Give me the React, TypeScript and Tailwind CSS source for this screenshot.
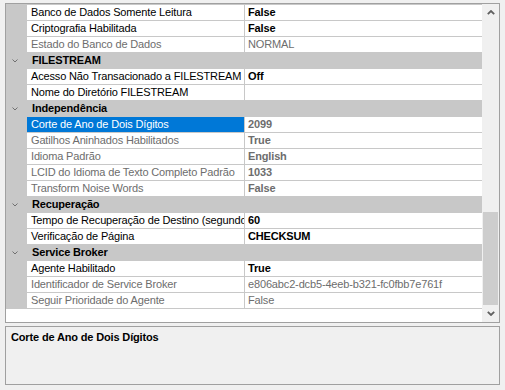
type Row =
  | { kind: "cat"; label: string }
  | {
      kind: "prop";
      name: string;
      value: string;
      readOnly?: boolean;
      bold?: boolean;
      selected?: boolean;
    };

const rows: Row[] = [
  { kind: "prop", name: "Banco de Dados Somente Leitura", value: "False", bold: true },
  { kind: "prop", name: "Criptografia Habilitada", value: "False", bold: true },
  { kind: "prop", name: "Estado do Banco de Dados", value: "NORMAL", readOnly: true },
  { kind: "cat", label: "FILESTREAM" },
  { kind: "prop", name: "Acesso Não Transacionado a FILESTREAM", value: "Off", bold: true },
  { kind: "prop", name: "Nome do Diretório FILESTREAM", value: "" },
  { kind: "cat", label: "Independência" },
  { kind: "prop", name: "Corte de Ano de Dois Dígitos", value: "2099", readOnly: true, bold: true, selected: true },
  { kind: "prop", name: "Gatilhos Aninhados Habilitados", value: "True", readOnly: true, bold: true },
  { kind: "prop", name: "Idioma Padrão", value: "English", readOnly: true, bold: true },
  { kind: "prop", name: "LCID do Idioma de Texto Completo Padrão", value: "1033", readOnly: true, bold: true },
  { kind: "prop", name: "Transform Noise Words", value: "False", readOnly: true, bold: true },
  { kind: "cat", label: "Recuperação" },
  { kind: "prop", name: "Tempo de Recuperação de Destino (segundos)", value: "60", bold: true },
  { kind: "prop", name: "Verificação de Página", value: "CHECKSUM", bold: true },
  { kind: "cat", label: "Service Broker" },
  { kind: "prop", name: "Agente Habilitado", value: "True", bold: true },
  { kind: "prop", name: "Identificador de Service Broker", value: "e806abc2-dcb5-4eeb-b321-fc0fbb7e761f", readOnly: true },
  { kind: "prop", name: "Seguir Prioridade do Agente", value: "False", readOnly: true },
];

function Chevron() {
  return (
    <svg width="6" height="4" viewBox="0 0 6 4" className="block">
      <polyline points="0.5,0.5 3,3 5.5,0.5" fill="none" stroke="#707070" strokeWidth="1" />
    </svg>
  );
}

function ScrollArrow({ up }: { up?: boolean }) {
  return (
    <div className="flex h-[17px] items-center justify-center">
      <svg width="8" height="5" viewBox="0 0 8 5" className="block">
        <polyline
          points={up ? "0.8,4.2 4,1 7.2,4.2" : "0.8,0.8 4,4 7.2,0.8"}
          fill="none"
          stroke="#606060"
          strokeWidth="1.8"
        />
      </svg>
    </div>
  );
}

export default function App() {
  return (
    <div className="h-[390px] w-[505px] bg-[#f0f0f0] px-[5px] pt-[3px] font-['Liberation_Sans',Arial,sans-serif] text-[11px] tracking-[-0.15px] text-black">
      <div className="flex h-[320px] border border-[#a0a0a0] bg-white">
        <div className="flex flex-1 flex-col">
          {rows.map((row, i) =>
            row.kind === "cat" ? (
              <div key={i} className="flex h-4 items-center border-t border-[#c8c8c8] bg-[#c8c8c8]">
                <div className="w-[21px] pl-[6px]">
                  <Chevron />
                </div>
                <span className="pl-[5px] font-bold leading-[15px]">{row.label}</span>
              </div>
            ) : (
              <div key={i} className="flex h-4 border-t border-[#c8c8c8]">
                <div className="w-[21px] bg-[#c8c8c8]" />
                <div
                  className={`w-[217px] overflow-hidden whitespace-nowrap pl-[4px] leading-[15px] ${
                    row.selected ? "bg-[#0078d7] text-white" : row.readOnly ? "text-[#6d6d6d]" : "text-black"
                  }`}
                >
                  {row.name}
                </div>
                <div
                  className={`flex-1 overflow-hidden whitespace-nowrap border-l border-[#c8c8c8] pl-[3px] leading-[15px] ${
                    row.bold ? "font-bold" : ""
                  } ${row.readOnly ? "text-[#6d6d6d]" : "text-black"}`}
                >
                  {row.value}
                </div>
              </div>
            )
          )}
          <div className="h-px bg-[#c8c8c8]" />
        </div>
        <div className="flex w-[17px] flex-col bg-[#f0f0f0]">
          <ScrollArrow up />
          <div className="flex-1" />
          <div className="mx-px h-[93px] bg-[#cdcdcd]" />
          <ScrollArrow />
        </div>
      </div>
      <div className="mt-[3px] h-[59px] border border-[#a0a0a0] bg-[#f0f0f0] px-[5px] pt-[3px]">
        <div className="font-bold leading-[15px]">Corte de Ano de Dois Dígitos</div>
      </div>
    </div>
  );
}
